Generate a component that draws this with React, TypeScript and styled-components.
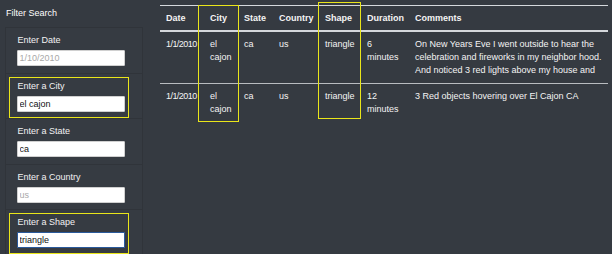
import React from "react";
import styled, { createGlobalStyle } from "styled-components";

const Global = createGlobalStyle`
  html, body { margin: 0; padding: 0; background: #353a41; }
  body { font-family: "Liberation Sans", Arial, sans-serif; color: #fff; }
  * { box-sizing: border-box; }
`;

const Page = styled.div`
  display: flex;
  width: 612px;
  height: 254px;
  overflow: hidden;
  background: #353a41;
`;

const Sidebar = styled.aside`
  width: 154px;
  flex: none;
  padding: 7px 0 0 5px;
`;

const Heading = styled.div`
  font-size: 9px;
  line-height: 11px;
  color: #fff;
  padding: 1px 0 0 1px;
  margin-bottom: 8px;
`;

const List = styled.ul`
  list-style: none;
  margin: 0;
  padding: 0;
  width: 138px;
  border: 1px solid #30343a;
  border-bottom: none;
`;

const Item = styled.li`
  height: 45.5px;
  padding: 3px 0 0 3px;
  border-bottom: 1px solid #30343a;
  background: #363b42;
`;

const Field = styled.div<{ $mark?: boolean }>`
  width: 120px;
  height: 41px;
  padding: 3px 0 0 6.5px;
  border: 1.5px solid ${(p) => (p.$mark ? "#e9e51a" : "transparent")};
  display: flex;
  flex-direction: column;
`;

const Label = styled.label`
  font-size: 9px;
  line-height: 11px;
  color: #f2f2f2;
  margin: 0 0 4px 1px;
`;

const Input = styled.input<{ $focus?: boolean }>`
  width: 108px;
  height: 16px;
  padding: 0 2px;
  margin: 0;
  font-family: "Liberation Sans", Arial, sans-serif;
  font-size: 9px;
  color: #111;
  background: #fff;
  border: ${(p) => (p.$focus ? "1.5px solid #2a5a9c" : "1px solid #d0d0d0")};
  border-radius: 1px;
  outline: none;
  &::placeholder { color: #a8a8a8; }
`;

const Main = styled.main`
  flex: 1;
  padding: 5px 4px 0 6px;
  position: relative;
`;

const Table = styled.table`
  width: 448px;
  border-collapse: collapse;
  table-layout: fixed;
  font-size: 9px;
  line-height: 13px;
  color: #f4f4f4;
`;

const HeadCell = styled.th<{ $w?: number }>`
  width: ${(p) => (p.$w ? `${p.$w}px` : "auto")};
  text-align: left;
  font-weight: bold;
  white-space: nowrap;
  padding: 6px 0 5px 6px;
  border-top: 1px solid #d5d8dc;
  border-bottom: 2px solid #d5d8dc;
  vertical-align: bottom;
`;

const Cell = styled.td<{ $tight?: boolean }>`
  padding: 6px;
  vertical-align: top;
  border-top: 1px solid #b9bcc0;
  letter-spacing: ${(p) => (p.$tight ? "-0.55px" : "normal")};
`;

const Clip = styled.div`
  max-height: 39px;
  overflow-x: visible;
  overflow-y: clip;
`;

const Mark = styled.div`
  position: absolute;
  border: 1.5px solid #e9e51a;
  pointer-events: none;
`;

const fields = [
  { label: "Enter Date", placeholder: "1/10/2010", value: "" },
  { label: "Enter a City", value: "el cajon", mark: true },
  { label: "Enter a State", value: "ca" },
  { label: "Enter a Country", placeholder: "us", value: "" },
  { label: "Enter a Shape", value: "triangle", mark: true, focus: true },
];

const cols = [
  { name: "Date", w: 44 },
  { name: "City", w: 34 },
  { name: "State", w: 35 },
  { name: "Country", w: 46 },
  { name: "Shape", w: 42 },
  { name: "Duration", w: 48 },
  { name: "Comments" },
];

const rows = [
  [
    "1/1/2010",
    "el cajon",
    "ca",
    "us",
    "triangle",
    "6 minutes",
    "On New Years Eve I went outside to hear the celebration and fireworks in my neighbor hood. And noticed 3 red lights above my house and they were moving slowly across the sky",
  ],
  ["1/1/2010", "el cajon", "ca", "us", "triangle", "12 minutes", "3 Red objects hovering over El Cajon CA"],
];

export default function App() {
  return (
    <>
      <Global />
      <Page>
        <Sidebar>
          <Heading>Filter Search</Heading>
          <List>
            {fields.map((f) => (
              <Item key={f.label}>
                <Field $mark={f.mark}>
                  <Label>{f.label}</Label>
                  <Input
                    $focus={f.focus}
                    defaultValue={f.value}
                    placeholder={f.placeholder}
                  />
                </Field>
              </Item>
            ))}
          </List>
        </Sidebar>
        <Main>
          <Table>
            <thead>
              <tr>
                {cols.map((c) => (
                  <HeadCell key={c.name} $w={c.w}>
                    {c.name}
                  </HeadCell>
                ))}
              </tr>
            </thead>
            <tbody>
              {rows.map((r, i) => (
                <tr key={i}>
                  {r.map((v, j) => (
                    <Cell key={j} $tight={j === 0}>
                      <Clip>{v}</Clip>
                    </Cell>
                  ))}
                </tr>
              ))}
            </tbody>
          </Table>
          <Mark style={{ left: 44, top: 5, width: 41, height: 117 }} />
          <Mark style={{ left: 164, top: 2, width: 43, height: 117 }} />
        </Main>
      </Page>
    </>
  );
}
